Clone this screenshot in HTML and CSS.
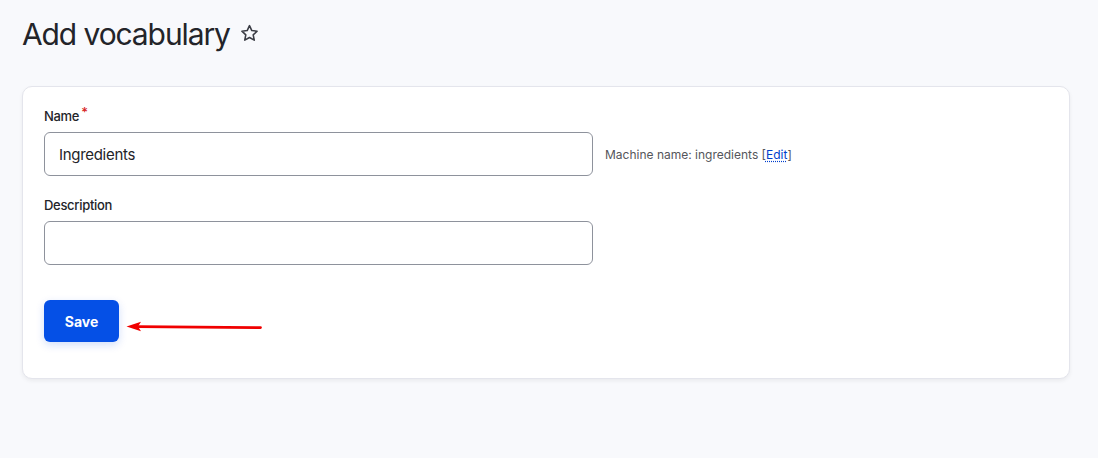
FILE: index.html
```html
<!DOCTYPE html>
<html lang="en">
<head>
<meta charset="utf-8">
<title>Add vocabulary</title>
<link rel="stylesheet" href="styles.css">
</head>
<body>
<main class="page">
  <div class="title-row">
    <h1 class="page-title">Add vocabulary</h1>
    <svg class="star" width="19" height="19" viewBox="0 0 18 18" aria-hidden="true">
      <path d="M9 1.6 L11.2 6.2 L16.2 6.8 L12.5 10.3 L13.5 15.3 L9 12.8 L4.5 15.3 L5.5 10.3 L1.8 6.8 L6.8 6.2 Z" fill="none" stroke="#3b3d45" stroke-width="1.5" stroke-linejoin="round"/>
    </svg>
  </div>
  <form class="card">
    <div class="field">
      <label class="label">Name<span class="req">*</span></label>
      <div class="field-row">
        <input class="text-input" type="text" value="Ingredients">
        <span class="machine">Machine name: ingredients [<a href="#" class="edit">Edit</a>]</span>
      </div>
    </div>
    <div class="field">
      <label class="label">Description</label>
      <div class="field-row">
        <input class="text-input" type="text" value="">
      </div>
    </div>
    <div class="actions">
      <button class="btn" type="button">Save</button>
      <svg class="arrow" width="138" height="14" viewBox="0 0 138 14" aria-hidden="true">
        <path d="M12 6.6 L134.5 7.6" stroke="#f00000" stroke-width="2.8" stroke-linecap="round"/>
        <path d="M0.5 6.5 L15 1.8 L12 6.6 L15 11.2 Z" fill="#f00000"/>
      </svg>
    </div>
  </form>
</main>
</body>
</html>
```
FILE: styles.css
```css
* { box-sizing: border-box; }
html, body { margin: 0; padding: 0; }
body {
  background: #f8f9fc;
  font-family: Inter, "Noto Sans", "Liberation Sans", sans-serif;
  color: #222330;
  width: 1098px;
  height: 458px;
  overflow: hidden;
}
.page {
  padding: 14px 28px 0 22px;
}
.title-row {
  display: flex;
  align-items: center;
  gap: 10px;
  height: 40px;
}
.page-title {
  margin: 0;
  font-size: 30px;
  font-weight: 400;
  letter-spacing: -1.1px;
  color: #232429;
  line-height: 40px;
}
.star { margin-top: -2px; }
.card {
  margin-top: 32px;
  background: #fff;
  border: 1px solid #e4e5ec;
  border-radius: 10px;
  box-shadow: 0 2px 4px rgba(0, 0, 0, 0.06);
  padding: 20px 22px 36px 21px;
  width: 1048px;
}
.field { margin-bottom: 20px; }
.label {
  display: block;
  font-size: 13px;
  font-weight: 500;
  letter-spacing: -0.3px;
  color: #232429;
  line-height: 18px;
  margin-bottom: 7px;
}
.req {
  color: #d72222;
  font-size: 13px;
  margin-left: 2px;
  position: relative;
  top: -4px;
}
.field-row {
  display: flex;
  align-items: center;
  gap: 12px;
}
.text-input {
  width: 549px;
  height: 44px;
  border: 1px solid #8e929c;
  border-radius: 6px;
  padding: 0 14px;
  font-family: inherit;
  font-size: 15px;
  letter-spacing: -0.3px;
  color: #232429;
  background: #fff;
  outline: none;
}
.machine {
  font-size: 12px;
  color: #55565b;
}
.edit {
  color: #003ecc;
  text-decoration: underline dotted;
  text-underline-offset: 2px;
}
.actions {
  margin-top: 35px;
  display: flex;
  align-items: center;
}
.btn {
  width: 75px;
  height: 42px;
  background: #0550e6;
  color: #fff;
  border: none;
  border-radius: 6px;
  font-family: inherit;
  font-size: 14px;
  font-weight: 700;
  box-shadow: 0 3px 8px rgba(5, 80, 230, 0.18);
}
.arrow {
  margin-left: 7px;
  margin-top: 11px;
}
```
